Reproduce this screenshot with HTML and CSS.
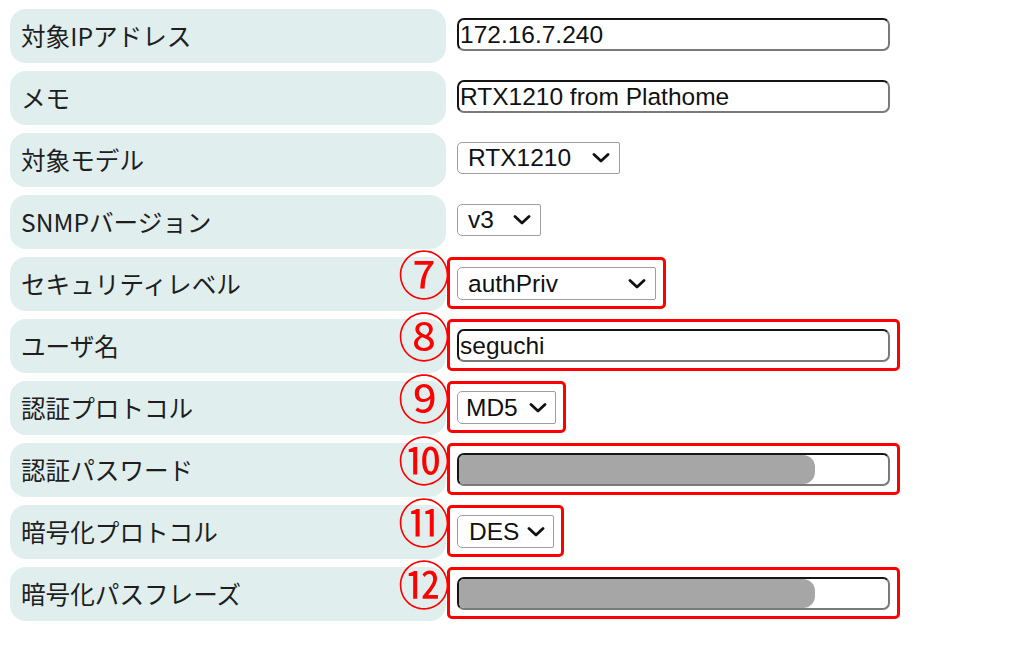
FILE: index.html
```html
<!DOCTYPE html>
<html lang="ja">
<head>
<meta charset="utf-8">
<title>SNMP設定</title>
<link rel="stylesheet" href="styles.css">
</head>
<body>
<div class="form">
  <div class="row">
    <div class="label">対象IPアドレス</div>
    <div class="value"><div class="plain"><div class="text-field">172.16.7.240</div></div></div>
  </div>
  <div class="row">
    <div class="label">メモ</div>
    <div class="value"><div class="plain"><div class="text-field">RTX1210 from Plathome</div></div></div>
  </div>
  <div class="row">
    <div class="label">対象モデル</div>
    <div class="value"><div class="plain"><div class="select w-model"><span>RTX1210</span><svg class="chev" viewBox="0 0 18 10" width="18" height="10"><polyline points="2,1.5 9,8 16,1.5"/></svg></div></div></div>
  </div>
  <div class="row">
    <div class="label">SNMPバージョン</div>
    <div class="value"><div class="plain"><div class="select w-ver"><span>v3</span><svg class="chev" viewBox="0 0 18 10" width="18" height="10"><polyline points="2,1.5 9,8 16,1.5"/></svg></div></div></div>
  </div>
  <div class="row">
    <div class="label">セキュリティレベル</div>
    <span class="num">⑦</span>
    <div class="value"><div class="mark"><div class="select w-level"><span>authPriv</span><svg class="chev" viewBox="0 0 18 10" width="18" height="10"><polyline points="2,1.5 9,8 16,1.5"/></svg></div></div></div>
  </div>
  <div class="row">
    <div class="label">ユーザ名</div>
    <span class="num">⑧</span>
    <div class="value"><div class="mark"><div class="text-field">seguchi</div></div></div>
  </div>
  <div class="row">
    <div class="label">認証プロトコル</div>
    <span class="num">⑨</span>
    <div class="value"><div class="mark"><div class="select w-auth"><span>MD5</span><svg class="chev" viewBox="0 0 18 10" width="18" height="10"><polyline points="2,1.5 9,8 16,1.5"/></svg></div></div></div>
  </div>
  <div class="row">
    <div class="label">認証パスワード</div>
    <span class="num">⑩</span>
    <div class="value"><div class="mark"><div class="text-field"><span class="redact"></span></div></div></div>
  </div>
  <div class="row">
    <div class="label">暗号化プロトコル</div>
    <span class="num">⑪</span>
    <div class="value"><div class="mark"><div class="select w-priv"><span>DES</span><svg class="chev" viewBox="0 0 18 10" width="18" height="10"><polyline points="2,1.5 9,8 16,1.5"/></svg></div></div></div>
  </div>
  <div class="row">
    <div class="label">暗号化パスフレーズ</div>
    <span class="num">⑫</span>
    <div class="value"><div class="mark"><div class="text-field"><span class="redact"></span></div></div></div>
  </div>
</div>
</body>
</html>
```

FILE: styles.css
```css
html, body {
  margin: 0;
  padding: 0;
  background: #ffffff;
}

.form {
  display: flex;
  flex-direction: column;
  gap: 8px;
  padding: 9px 0 0 10px;
}

.row {
  position: relative;
  display: flex;
  height: 54px;
}

.label {
  box-sizing: border-box;
  width: 436px;
  height: 54px;
  display: flex;
  align-items: center;
  padding-left: 11px;
  padding-bottom: 2px;
  background: #e0eeee;
  border-radius: 16px;
  color: #1e1e1e;
  font-family: "Noto Sans CJK JP", "Noto Sans", sans-serif;
  font-size: 24.6px;
}

.num {
  position: absolute;
  left: 388px;
  top: -4px;
  width: 46px;
  height: 40px;
  overflow: visible;
  text-align: center;
  color: #ff0000;
  font-family: "Noto Sans CJK JP", sans-serif;
  font-size: 52px;
  line-height: 40px;
}

.value {
  margin-left: 1px;
  display: flex;
  align-items: flex-start;
}

.plain {
  margin: 9px 0 0 10px;
}

.mark {
  border: 3px solid #ff0000;
  border-radius: 5px;
  padding: 7px 7px 6px 7px;
}

.text-field {
  box-sizing: border-box;
  width: 433px;
  height: 33px;
  display: flex;
  align-items: center;
  padding: 0 1px;
  overflow: hidden;
  border: 2px solid;
  border-color: #151515 #7a7a7a #7a7a7a #151515;
  border-radius: 7px;
  background: #ffffff;
  color: #111111;
  font-family: "Liberation Sans", Arial, sans-serif;
  font-size: 24.5px;
  white-space: nowrap;
}

.redact {
  align-self: stretch;
  width: 356px;
  margin-left: -1px;
  background: #a6a6a6;
  border-radius: 0 12px 12px 0;
}

.select {
  box-sizing: border-box;
  height: 33px;
  display: flex;
  align-items: center;
  justify-content: space-between;
  padding: 0 9px 0 10px;
  border: 1px solid #9e9e9e;
  border-radius: 5px 2px 2px 5px;
  background: #ffffff;
  color: #111111;
  font-family: "Liberation Sans", Arial, sans-serif;
  font-size: 24.5px;
  white-space: nowrap;
}

.chev {
  flex: none;
}

.chev polyline {
  fill: none;
  stroke: #111111;
  stroke-width: 2.8;
  stroke-linecap: round;
  stroke-linejoin: round;
}

.w-model { width: 163px; height: 32px; }
.w-ver { width: 84px; height: 32px; }
.w-level { width: 199px; }
.w-auth { width: 99px; padding-left: 8px; padding-right: 8px; }
.w-priv { width: 97px; padding-left: 11px; padding-right: 8px; }
```
